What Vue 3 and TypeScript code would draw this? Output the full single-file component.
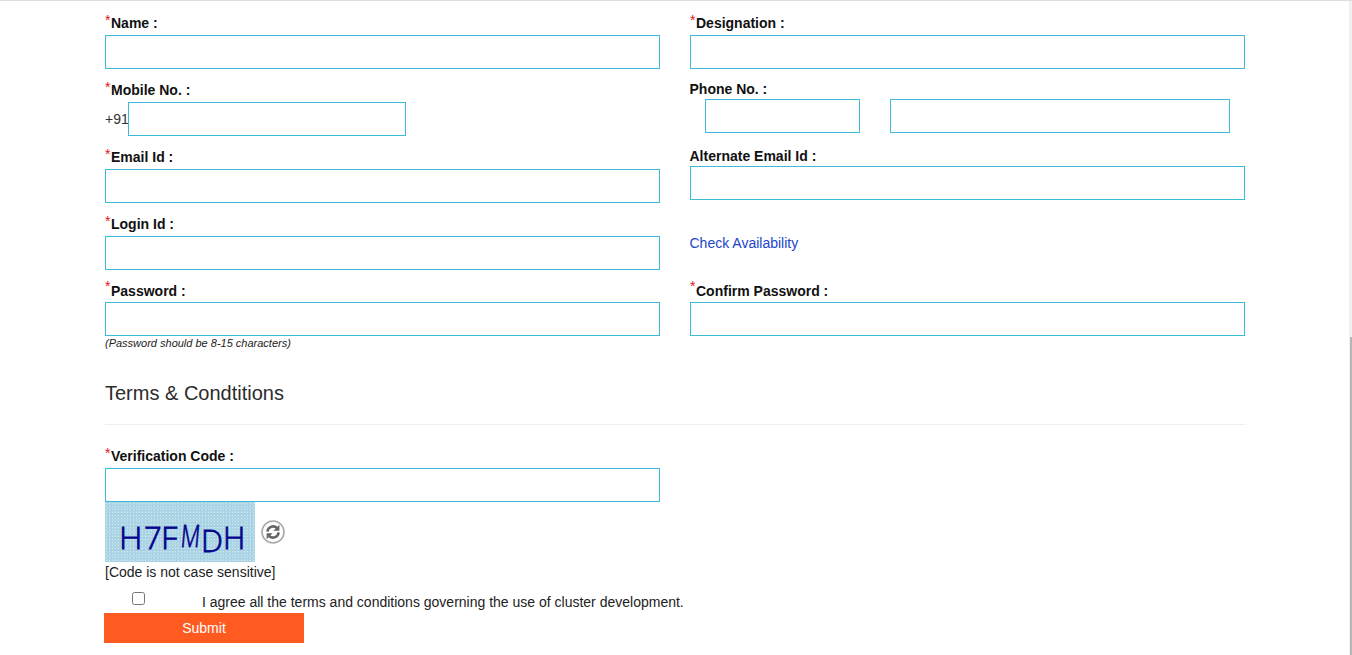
<script setup lang="ts">
interface Field { label: string; required: boolean }
const rows: Field[][] = [
  [{ label: 'Name :', required: true }, { label: 'Designation :', required: true }],
]
const captcha: string[] = ['H', '7', 'F', 'M', 'D', 'H']
</script>

<template>
  <div class="root">
    <div class="scrollbar"><div class="thumb"></div></div>
    <main class="page">
      <div class="row" v-for="(r, i) in rows" :key="i">
        <div class="field" v-for="f in r" :key="f.label">
          <label class="lab"><span class="star">*</span>{{ f.label }}</label>
          <input class="box" type="text" />
        </div>
      </div>

      <div class="row">
        <div class="field">
          <label class="lab"><span class="star">*</span>Mobile No. :</label>
          <div class="mobile"><span class="code">+91</span><input class="box mob" type="text" /></div>
        </div>
        <div class="field">
          <label class="lab plain">Phone No. :</label>
          <div class="phones">
            <input class="box std" type="text" />
            <input class="box num" type="text" />
          </div>
        </div>
      </div>

      <div class="row">
        <div class="field">
          <label class="lab"><span class="star">*</span>Email Id :</label>
          <input class="box" type="text" />
        </div>
        <div class="field">
          <label class="lab plain">Alternate Email Id :</label>
          <input class="box" type="text" />
        </div>
      </div>

      <div class="row short">
        <div class="field">
          <label class="lab"><span class="star">*</span>Login Id :</label>
          <input class="box" type="text" />
        </div>
        <div class="field check">
          <a class="link" href="#">Check Availability</a>
        </div>
      </div>

      <div class="row pass">
        <div class="field">
          <label class="lab tight"><span class="star">*</span>Password :</label>
          <input class="box" type="text" />
          <small class="hint">(Password should be 8-15 characters)</small>
        </div>
        <div class="field">
          <label class="lab tight"><span class="star">*</span>Confirm Password :</label>
          <input class="box" type="text" />
        </div>
      </div>

      <h2 class="terms">Terms &amp; Condtitions</h2>
      <hr class="rule" />

      <div class="row verify">
        <div class="field">
          <label class="lab"><span class="star">*</span>Verification Code :</label>
          <input class="box" type="text" />
        </div>
      </div>

      <div class="captcha-line">
        <div class="captcha">
          <span v-for="(c, i) in captcha" :key="i" :class="'c' + i">{{ c }}</span>
        </div>
        <svg class="refresh" width="26" height="26" viewBox="0 0 26 26">
          <circle cx="13" cy="13" r="11" fill="#fff" stroke="#a9a9a9" stroke-width="1.6" />
          <path d="M7.4 12.6a5.7 5.7 0 0 1 9.4-3.8" fill="none" stroke="#666" stroke-width="2.6" />
          <path d="M19.4 5.8v6h-6z" fill="#666" />
          <path d="M18.6 13.4a5.7 5.7 0 0 1-9.4 3.8" fill="none" stroke="#666" stroke-width="2.6" />
          <path d="M6.6 20.2v-6h6z" fill="#666" />
        </svg>
      </div>

      <p class="note">[Code is not case sensitive]</p>

      <div class="agree">
        <input class="tick" type="checkbox" />
        <span>I agree all the terms and conditions governing the use of cluster development.</span>
      </div>

      <button class="submit" type="button">Submit</button>
    </main>
  </div>
</template>

<style>
html, body { margin: 0; background: #fff; overflow: hidden; }
</style>

<style scoped>
.root {
  box-sizing: border-box;
  height: 655px;
  border-top: 1px solid #ddd;
}
.page {
  box-sizing: border-box;
  width: 1170px;
  margin-left: 90px;
  padding: 1px 15px 0;
  font-family: "Liberation Sans", Arial, sans-serif;
  font-size: 14px;
  line-height: 20px;
  color: #222;
}
.scrollbar {
  position: fixed;
  top: 1px;
  right: 0;
  width: 3px;
  height: 654px;
  background: #f1f1f1;
}
.thumb {
  position: absolute;
  top: 336px;
  right: 0;
  width: 2px;
  height: 318px;
  background: #b5b5b5;
}
.row {
  display: grid;
  grid-template-columns: 555px 555px;
  column-gap: 30px;
  height: 67px;
}
.row.short { height: 66px; }
.row.pass { height: 82px; }
.field { display: flex; flex-direction: column; align-items: flex-start; }
.lab {
  display: flex;
  height: 33px;
  box-sizing: border-box;
  align-items: flex-end;
  padding-bottom: 2px;
  font-weight: 700;
  color: #111;
}
.lab.plain { height: 30px; padding-bottom: 0; margin-left: -0.5px; }
.lab.tight { padding-bottom: 1px; }
.star {
  color: #e0131c;
  font-weight: 400;
  align-self: flex-start;
  margin-top: 11px;
  line-height: 14px;
  width: 6px;
}
.lab.tight .star { margin-top: 10px; }
.box {
  display: block;
  box-sizing: border-box;
  width: 555px;
  height: 34px;
  margin: 0;
  padding: 0 6px;
  border: 1px solid #3bbad9;
  border-radius: 0;
  background: #fff;
  outline: none;
}
.mobile { display: flex; align-items: center; color: #333; }
.code { width: 23px; }
.box.mob { width: 278px; }
.phones { display: flex; gap: 30px; padding-left: 15px; }
.box.std { width: 155px; }
.box.num { width: 340px; }
.check { justify-content: flex-start; padding-top: 30px; }
.link { color: #2145c9; text-decoration: none; margin-left: -0.5px; }
.hint {
  display: block;
  font-size: 11px;
  line-height: 14px;
  font-style: italic;
  color: #222;
}
.terms {
  margin: 0;
  padding-top: 27px;
  font-size: 20px;
  line-height: 30px;
  font-weight: 400;
  color: #2b2b2b;
}
.rule {
  width: 1140px;
  margin: 16px 0 0;
  border: 0;
  border-top: 1px solid #eee;
}
.row.verify { margin-top: 10px; height: 67px; }
.captcha-line { display: flex; align-items: center; gap: 5px; height: 60px; }
.captcha {
  display: block;
  position: relative;
  width: 150px;
  height: 60px;
  background-color: #aed6e6;
  background-image:
    radial-gradient(#d2e9f2 0.7px, transparent 0.9px),
    radial-gradient(#96c6da 0.6px, transparent 0.8px);
  background-size: 3px 3px, 4px 4px;
  background-position: 0 0, 1px 2px;
  font-family: "Open Sans", "Liberation Sans", sans-serif;
  font-weight: 300;
  font-size: 31px;
  line-height: 26px;
  color: #03038c;
  -webkit-text-stroke: 0.8px #03038c;
  overflow: hidden;
}
/* letters of a captcha sit on a free canvas */
.captcha span { position: absolute; top: 22px; display: block; transform-origin: 0 50%; }
.c0 { left: 14px; transform: scaleX(1.05); }
.c1 { left: 39px; }
.c2 { left: 56px; transform: scaleX(1.05); }
.c3 { left: 76px; top: 20px !important; transform: skewX(-5deg) scaleX(0.72); }
.c4 { left: 96px; top: 25px !important; }
.c5 { left: 118px; }
.refresh { flex: none; }
.note { margin: 0; color: #222; }
.agree {
  display: flex;
  height: 31px;
  align-items: flex-start;
  color: #222;
}
.agree span { margin-top: 10px; }
.tick {
  width: 13px;
  height: 13px;
  margin: 10px 57px 0 27px;
  flex: none;
}
.submit {
  display: block;
  width: 200px;
  height: 30px;
  margin: 0 0 0 -1px;
  padding: 0;
  border: 0;
  background: #ff5a1f;
  color: #fff;
  font: 14px "Liberation Sans", Arial, sans-serif;
}
</style>
